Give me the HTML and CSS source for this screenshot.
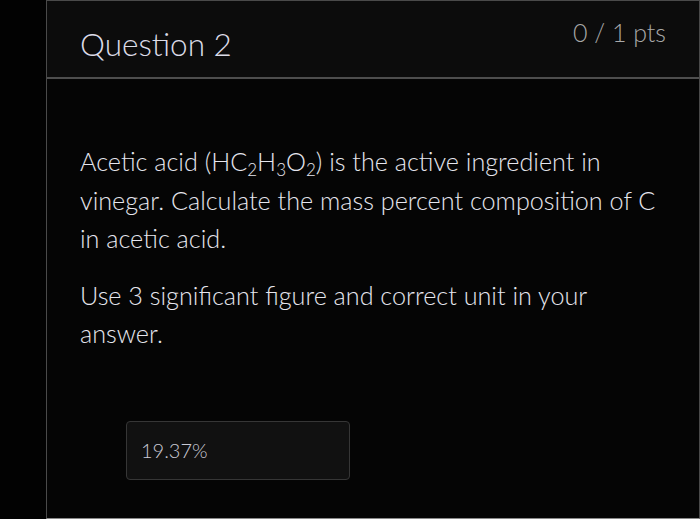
FILE: index.html
```html
<!DOCTYPE html>
<html>
<head>
<meta charset="utf-8">
<link rel="stylesheet" href="styles.css">
</head>
<body>
<div class="page">
  <div class="gutter"></div>
  <div class="card">
    <div class="header">
      <h2 class="title">Question 2</h2>
      <div class="pts">0 / 1 pts</div>
    </div>
    <div class="content">
      <p class="para">Acetic acid (HC<sub>2</sub>H<sub>3</sub>O<sub>2</sub>) is the active ingredient in vinegar. Calculate the mass percent composition of C in acetic acid.</p>
      <p class="para">Use 3 significant figure and correct unit in your answer.</p>
      <div class="answer">19.37%</div>
    </div>
  </div>
</div>
</body>
</html>
```
FILE: styles.css
```css
html, body {
  margin: 0;
  padding: 0;
  background: #020202;
  height: 100%;
}
.page {
  display: flex;
  height: 519px;
  font-family: Lato, "Open Sans", sans-serif;
  font-weight: 300;
}
.gutter {
  width: 46px;
  flex: none;
}
.card {
  width: 652px;
  border: 1px solid #4a4a4a;
  border-bottom-color: #8a8a8a;
  background: #050505;
  display: flex;
  flex-direction: column;
}
.header {
  height: 78px;
  flex: none;
  box-sizing: border-box;
  background: #0c0c0c;
  border-bottom: 2px solid #4e4e4e;
  display: flex;
  justify-content: space-between;
  align-items: flex-start;
  padding: 0 33px 0 33px;
}
.title {
  margin: 24px 0 0 0;
  font-weight: 300;
  font-size: 31.5px;
  line-height: 38px;
  color: #dcdce8;
}
.pts {
  margin-top: 15px;
  font-size: 25px;
  line-height: 32px;
  color: #a8a8a8;
}
.content {
  padding: 63px 40px 0 33px;
}
.para {
  margin: 0 0 18px 0;
  font-size: 25.2px;
  line-height: 38.5px;
  color: #e6e6ee;
}
.para sub {
  font-size: 17px;
  line-height: 0;
  vertical-align: -5px;
}
.answer {
  margin: 68px 0 0 46px;
  width: 224px;
  height: 59px;
  box-sizing: border-box;
  border: 1px solid #363636;
  border-radius: 4px;
  background: #111111;
  color: #c9c9d4;
  font-size: 20px;
  line-height: 57px;
  padding-left: 14px;
}
```
